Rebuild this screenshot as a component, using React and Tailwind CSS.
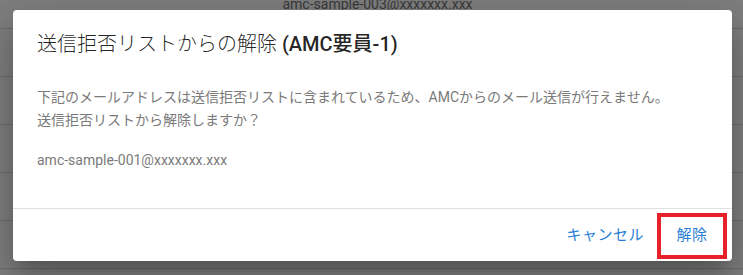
import React from 'react';

const font = { fontFamily: 'Roboto, "Noto Sans CJK JP", "Noto Sans", sans-serif' };

const rows = ['amc-sample-003@xxxxxxx.xxx', '', '', '', '', ''];

const App = () => {
  return (
    <div className="relative h-[275px] w-[743px] overflow-hidden bg-white" style={font}>
      {/* page behind the dialog */}
      <div className="-mt-[19px] flex flex-col">
        {rows.map((row, i) => (
          <div
            key={i}
            className="flex h-[48px] items-center justify-center border-b border-[#d6d6d6] pl-[12px] text-[14px] text-[#757575]"
          >
            {row}
          </div>
        ))}
      </div>

      {/* backdrop + dialog */}
      <div className="absolute inset-0 bg-black/50">
        <div className="ml-[13px] mt-[10px] flex h-[251px] w-[719px] flex-col rounded-[4px] bg-white shadow-[0_11px_15px_-7px_rgba(0,0,0,0.2),0_24px_38px_3px_rgba(0,0,0,0.14),0_9px_46px_8px_rgba(0,0,0,0.12)]">
          <h2 className="px-6 pb-[26px] pt-[18px] text-[20px] leading-8 text-black/[0.87]">
            <span className="font-light">送信拒否リストからの解除 </span>
            <span className="font-medium">(AMC要員-1)</span>
          </h2>

          <div className="flex-1 px-6 text-[14px] leading-[23px] text-[#7a7a7a]">
            <p>
              下記のメールアドレスは送信拒否リストに含まれているため、AMCからのメール送信が行えません。
              <br />
              送信拒否リストから解除しますか？
            </p>
            <p className="mt-[17px]">amc-sample-001@xxxxxxx.xxx</p>
          </div>

          <div className="flex h-[53px] items-center justify-end gap-2 border-t border-[#e0e0e0] px-2">
            <button
              type="button"
              className="h-9 min-w-16 rounded px-2 text-[15px] tracking-[0.5px] text-[#2a7fd4]"
            >
              キャンセル
            </button>
            <div className="relative">
              <button
                type="button"
                className="h-9 min-w-16 rounded px-2 text-[15px] tracking-[0.5px] text-[#2a7fd4]"
              >
                解除
              </button>
              <div className="pointer-events-none absolute -bottom-[6px] -left-[3px] -right-[3px] -top-[4px] border-4 border-[#e8202a]" />
            </div>
          </div>
        </div>
      </div>
    </div>
  );
};

export default App;
